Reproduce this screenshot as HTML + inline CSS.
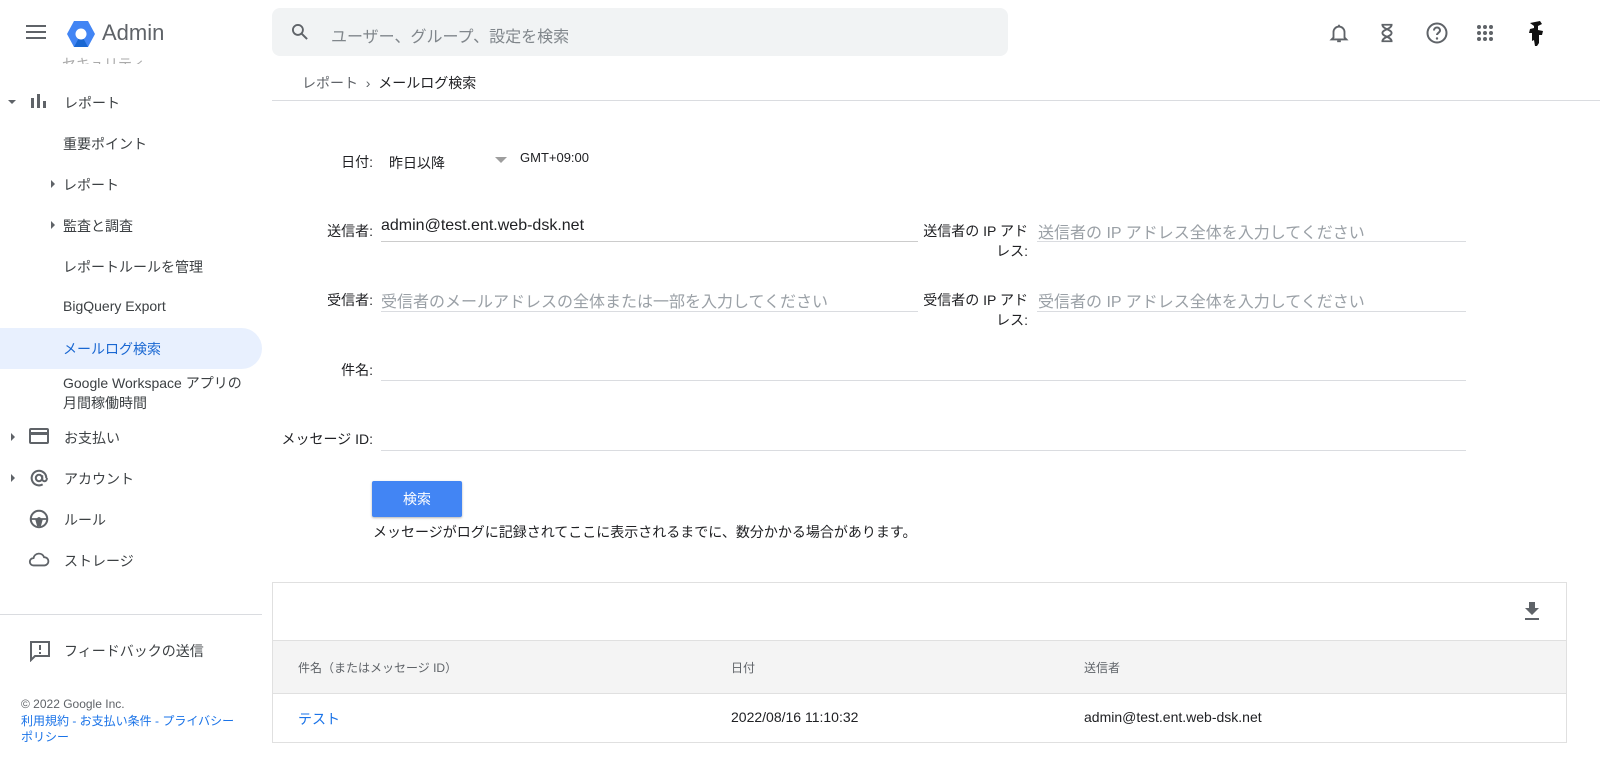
<!DOCTYPE html>
<html><head><meta charset="utf-8"><style>
*{box-sizing:border-box;margin:0;padding:0}
body{width:1600px;height:772px;overflow:hidden;background:#fff;font-family:"Liberation Sans","Noto Sans CJK JP",sans-serif;color:#202124;position:relative}
.a{position:absolute;white-space:nowrap}
.nav{font-size:14px;color:#3c4043}
.lbl{font-size:14px;color:#202124;text-align:right}
.line{position:absolute;height:1px;background:#dadce0}
.ph{font-size:16px;color:#9aa0a6}
.tri{position:absolute;width:0;height:0;border-top:4px solid transparent;border-bottom:4px solid transparent;border-left:4px solid #5f6368}
</style></head><body>
<!-- header -->
<svg class="a" style="left:26px;top:24px" width="20" height="16"><rect y="1" width="20" height="2" fill="#5f6368"/><rect y="7" width="20" height="2" fill="#5f6368"/><rect y="13" width="20" height="2" fill="#5f6368"/></svg>
<svg class="a" style="left:66px;top:19px" width="30" height="30" viewBox="0 0 30 30"><polygon points="8,2 22,2 29,15 22,28 8,28 1,15" fill="#4285f4"/><polygon points="15,15 22,28 8,28" fill="#1967d2"/><circle cx="15" cy="15" r="5.5" fill="#fff"/></svg>
<div class="a" style="left:102px;top:20px;font-size:22px;color:#5f6368">Admin</div>
<div class="a" style="left:272px;top:8px;width:736px;height:48px;background:#f1f3f4;border-radius:8px"></div>
<svg class="a" style="left:290px;top:22px" width="20" height="20" viewBox="0 0 24 24"><circle cx="9.5" cy="9.5" r="6" fill="none" stroke="#5f6368" stroke-width="2.2"/><path d="M14 14l6.5 6.5" stroke="#5f6368" stroke-width="2.4"/></svg>
<div class="a" style="left:331px;top:23px;font-size:16px;color:#80868b">ユーザー、グループ、設定を検索</div>
<svg class="a" style="left:1328px;top:21px" width="22" height="24" viewBox="0 0 24 24"><path d="M6 17V11a6 6 0 0112 0v6l2 2H4z" fill="none" stroke="#5f6368" stroke-width="2"/><path d="M10 21h4" stroke="#5f6368" stroke-width="2"/><path d="M12 3v2" stroke="#5f6368" stroke-width="2"/></svg>
<svg class="a" style="left:1376px;top:21px" width="22" height="24" viewBox="0 0 24 24"><path d="M6 3h12M6 21h12M7 3c0 5 10 5 10 9s-10 4-10 9M17 3c0 5-10 5-10 9s10 4 10 9" fill="none" stroke="#5f6368" stroke-width="2"/></svg>
<svg class="a" style="left:1425px;top:21px" width="24" height="24" viewBox="0 0 24 24"><circle cx="12" cy="12" r="9.5" fill="none" stroke="#5f6368" stroke-width="2"/><path d="M9 9.5a3 3 0 116 0c0 2-3 2.5-3 4.5" fill="none" stroke="#5f6368" stroke-width="2"/><circle cx="12" cy="17.5" r="1.2" fill="#5f6368"/></svg>
<svg class="a" style="left:1476px;top:24px" width="18" height="18"><g fill="#5f6368"><circle cx="3" cy="3" r="2"/><circle cx="9" cy="3" r="2"/><circle cx="15" cy="3" r="2"/><circle cx="3" cy="9" r="2"/><circle cx="9" cy="9" r="2"/><circle cx="15" cy="9" r="2"/><circle cx="3" cy="15" r="2"/><circle cx="9" cy="15" r="2"/><circle cx="15" cy="15" r="2"/></g></svg>
<svg class="a" style="left:1522px;top:18px" width="30" height="30" viewBox="0 0 30 30"><path d="M8 5l10-2 2 3-4 2v4l5 1-1 4-3 0v8l-2 3h-2l-1-6-2 1v-8l-3 0 1-4 4-1V8z" fill="#111"/></svg>
<!-- sidebar -->
<div class="a nav" style="left:62px;top:54px;color:#aaa">セキュリティ</div>
<div class="a" style="left:0;top:64px;width:262px;height:10px;background:#fff"></div>
<div class="a" style="left:8px;top:100px;width:0;height:0;border-left:4px solid transparent;border-right:4px solid transparent;border-top:4px solid #5f6368"></div>
<svg class="a" style="left:30px;top:94px" width="18" height="14"><rect x="1" y="4" width="3" height="10" fill="#5f6368"/><rect x="7" y="0" width="3" height="14" fill="#5f6368"/><rect x="13" y="7" width="3" height="7" fill="#5f6368"/></svg>
<div class="a nav" style="left:64px;top:93px">レポート</div>
<div class="a nav" style="left:63px;top:134px">重要ポイント</div>
<div class="tri" style="left:51px;top:180px"></div>
<div class="a nav" style="left:63px;top:175px">レポート</div>
<div class="tri" style="left:51px;top:221px"></div>
<div class="a nav" style="left:63px;top:216px">監査と調査</div>
<div class="a nav" style="left:63px;top:257px">レポートルールを管理</div>
<div class="a nav" style="left:63px;top:298px">BigQuery Export</div>
<div class="a" style="left:0;top:328px;width:262px;height:41px;background:#e8f0fe;border-radius:0 21px 21px 0"></div>
<div class="a nav" style="left:63px;top:339px;color:#1967d2">メールログ検索</div>
<div class="a nav" style="left:63px;top:373px;line-height:20px">Google Workspace アプリの<br>月間稼働時間</div>
<div class="tri" style="left:11px;top:433px"></div>
<svg class="a" style="left:29px;top:428px" width="20" height="16"><rect x="1" y="1" width="18" height="14" rx="1" fill="none" stroke="#5f6368" stroke-width="2"/><rect x="1" y="4" width="18" height="3" fill="#5f6368"/></svg>
<div class="a nav" style="left:64px;top:428px">お支払い</div>
<div class="tri" style="left:11px;top:474px"></div>
<svg class="a" style="left:28px;top:467px" width="22" height="22" viewBox="0 0 24 24"><path d="M20 12a8 8 0 10-4 7" fill="none" stroke="#5f6368" stroke-width="2.2"/><circle cx="12" cy="12" r="3.5" fill="none" stroke="#5f6368" stroke-width="2.2"/><path d="M15.5 9v4a2.5 2.5 0 005 0v-1" fill="none" stroke="#5f6368" stroke-width="2.2"/></svg>
<div class="a nav" style="left:64px;top:469px">アカウント</div>
<svg class="a" style="left:28px;top:508px" width="22" height="22" viewBox="0 0 24 24"><circle cx="12" cy="12" r="9" fill="none" stroke="#5f6368" stroke-width="2.2"/><path d="M3 11h18v2h-5l-2 7h-4l-2-7H3z" fill="#5f6368"/><circle cx="12" cy="12.5" r="2.5" fill="#5f6368"/></svg>
<div class="a nav" style="left:64px;top:510px">ルール</div>
<svg class="a" style="left:28px;top:550px" width="22" height="18" viewBox="0 0 24 18"><path d="M6 16a4 4 0 010-8 6 6 0 0111.5-1A4.5 4.5 0 0118 16z" fill="none" stroke="#5f6368" stroke-width="2"/></svg>
<div class="a nav" style="left:64px;top:551px">ストレージ</div>
<div class="line" style="left:0;top:614px;width:262px"></div>
<svg class="a" style="left:29px;top:640px" width="22" height="22" viewBox="0 0 22 22"><path d="M2 2h18v14H6l-4 4z" fill="none" stroke="#5f6368" stroke-width="2"/><rect x="10" y="5" width="2" height="5" fill="#5f6368"/><rect x="10" y="12" width="2" height="2" fill="#5f6368"/></svg>
<div class="a nav" style="left:64px;top:641px">フィードバックの送信</div>
<div class="a" style="left:21px;top:697px;font-size:12px;color:#5f6368">© 2022 Google Inc.</div>
<div class="a" style="left:21px;top:713px;font-size:12px;color:#1a73e8;line-height:16px">利用規約 - お支払い条件 - プライバシー<br>ポリシー</div>
<!-- main -->
<div class="a" style="left:302px;top:73px;font-size:14px;color:#5f6368">レポート &nbsp;›&nbsp; <span style="color:#202124">メールログ検索</span></div>
<div class="line" style="left:272px;top:100px;width:1328px"></div>
<div class="a lbl" style="left:270px;top:152px;width:103px">日付:</div>
<div class="a" style="left:389px;top:153px;font-size:14px">昨日以降</div>
<div class="a" style="left:495px;top:157px;border-left:6px solid transparent;border-right:6px solid transparent;border-top:6px solid #9e9e9e"></div>
<div class="a" style="left:520px;top:150px;font-size:13px">GMT+09:00</div>
<div class="a lbl" style="left:270px;top:221px;width:103px">送信者:</div>
<div class="a" style="left:381px;top:217px;font-size:16px">admin@test.ent.web-dsk.net</div>
<div class="line" style="left:381px;top:241px;width:537px;background:#ccc"></div>
<div class="a lbl" style="left:920px;top:221px;width:108px;text-align:right;line-height:20px">送信者の IP アド<br>レス:</div>
<div class="a ph" style="left:1038px;top:219px">送信者の IP アドレス全体を入力してください</div>
<div class="line" style="left:1037px;top:241px;width:429px"></div>
<div class="a lbl" style="left:270px;top:290px;width:103px">受信者:</div>
<div class="a ph" style="left:381px;top:288px">受信者のメールアドレスの全体または一部を入力してください</div>
<div class="line" style="left:381px;top:311px;width:537px"></div>
<div class="a lbl" style="left:920px;top:290px;width:108px;text-align:right;line-height:20px">受信者の IP アド<br>レス:</div>
<div class="a ph" style="left:1038px;top:288px">受信者の IP アドレス全体を入力してください</div>
<div class="line" style="left:1037px;top:311px;width:429px"></div>
<div class="a lbl" style="left:270px;top:360px;width:103px">件名:</div>
<div class="line" style="left:381px;top:380px;width:1085px"></div>
<div class="a lbl" style="left:270px;top:429px;width:103px">メッセージ ID:</div>
<div class="line" style="left:381px;top:450px;width:1085px"></div>
<div class="a" style="left:372px;top:481px;width:90px;height:36px;background:#4285f4;border-radius:2px;box-shadow:0 1px 2px rgba(0,0,0,.3);color:#fff;font-size:14px;text-align:center;line-height:36px">検索</div>
<div class="a" style="left:373px;top:522px;font-size:14px">メッセージがログに記録されてここに表示されるまでに、数分かかる場合があります。</div>
<!-- table -->
<div class="a" style="left:272px;top:582px;width:1295px;height:161px;border:1px solid #e0e0e0"></div>
<svg class="a" style="left:1524px;top:601px" width="16" height="20" viewBox="0 0 16 20"><path d="M5 1h6v6h4l-7 7-7-7h4z" fill="#5f6368"/><rect x="1" y="17" width="14" height="2" fill="#5f6368"/></svg>
<div class="a" style="left:273px;top:640px;width:1293px;height:54px;background:#f4f4f4;border-top:1px solid #e0e0e0;border-bottom:1px solid #e0e0e0"></div>
<div class="a" style="left:298px;top:659px;font-size:12px;color:#5f6368">件名（またはメッセージ ID）</div>
<div class="a" style="left:731px;top:659px;font-size:12px;color:#5f6368">日付</div>
<div class="a" style="left:1084px;top:659px;font-size:12px;color:#5f6368">送信者</div>
<div class="a" style="left:298px;top:709px;font-size:14px;color:#1a73e8">テスト</div>
<div class="a" style="left:731px;top:709px;font-size:14px">2022/08/16 11:10:32</div>
<div class="a" style="left:1084px;top:709px;font-size:14px">admin@test.ent.web-dsk.net</div>
</body></html>
